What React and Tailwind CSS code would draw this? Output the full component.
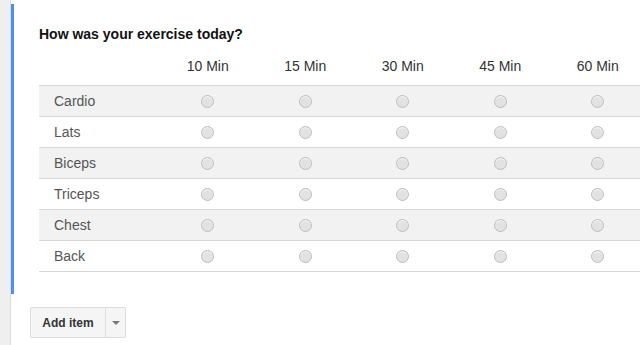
const columns = ["10 Min", "15 Min", "30 Min", "45 Min", "60 Min"];
const rows = ["Cardio", "Lats", "Biceps", "Triceps", "Chest", "Back"];

const Radio = () => (
  <span className="block w-[13px] h-[13px] rounded-full border border-[#bdbdbd] bg-[#e2e2e2] shadow-[inset_0_1px_1px_rgba(255,255,255,0.7)]" />
);

export default function App() {
  return (
    <div
      className="flex w-[640px] h-[345px] overflow-hidden bg-white"
      style={{ fontFamily: '"Liberation Sans", Arial, sans-serif' }}
    >
      {/* side strip */}
      <div className="w-[11px] shrink-0 bg-[#efefef] border-r border-[#dddddd]" />

      <div className="flex flex-col flex-1 min-w-0">
        {/* question card */}
        <div className="mt-[4px] border-l-[3px] border-[#4d8ef0] pl-[25px] pt-[22px] pb-[22px]">
          <h2 className="text-[14px] leading-[16px] font-bold text-[#111]">
            How was your exercise today?
          </h2>

          <div className="w-[610px]">
            {/* header */}
            <div className="grid grid-cols-[120px_repeat(5,97.5px)] pt-[16px] pb-[11px] border-b border-[#d8d8d8]">
              <div />
              {columns.map((c) => (
                <div key={c} className="text-center text-[14px] leading-[16px] text-[#333]">
                  {c}
                </div>
              ))}
            </div>

            {rows.map((r, i) => (
              <div
                key={r}
                className={`grid grid-cols-[120px_repeat(5,97.5px)] h-[31px] items-center border-b border-[#d8d8d8] ${
                  i % 2 === 0 ? "bg-[#f2f2f2]" : "bg-white"
                }`}
              >
                <div className="pl-[15px] text-[14px] leading-[16px] text-[#555]">{r}</div>
                {columns.map((c) => (
                  <div key={c} className="flex justify-center">
                    <Radio />
                  </div>
                ))}
              </div>
            ))}
          </div>
        </div>

        {/* add item button */}
        <div className="ml-[19px] mt-[13px] flex h-[31px] w-[96px] rounded-[2px] border border-[#dcdcdc] bg-[#f5f5f5]">
          <div className="flex items-center justify-center w-[75px] border-r border-[#dcdcdc] text-[12px] font-bold text-[#333]">
            Add item
          </div>
          <div className="flex flex-1 items-center justify-center">
            <svg width="8" height="4" viewBox="0 0 8 4">
              <path d="M0 0h8L4 4z" fill="#777" />
            </svg>
          </div>
        </div>
      </div>
    </div>
  );
}
